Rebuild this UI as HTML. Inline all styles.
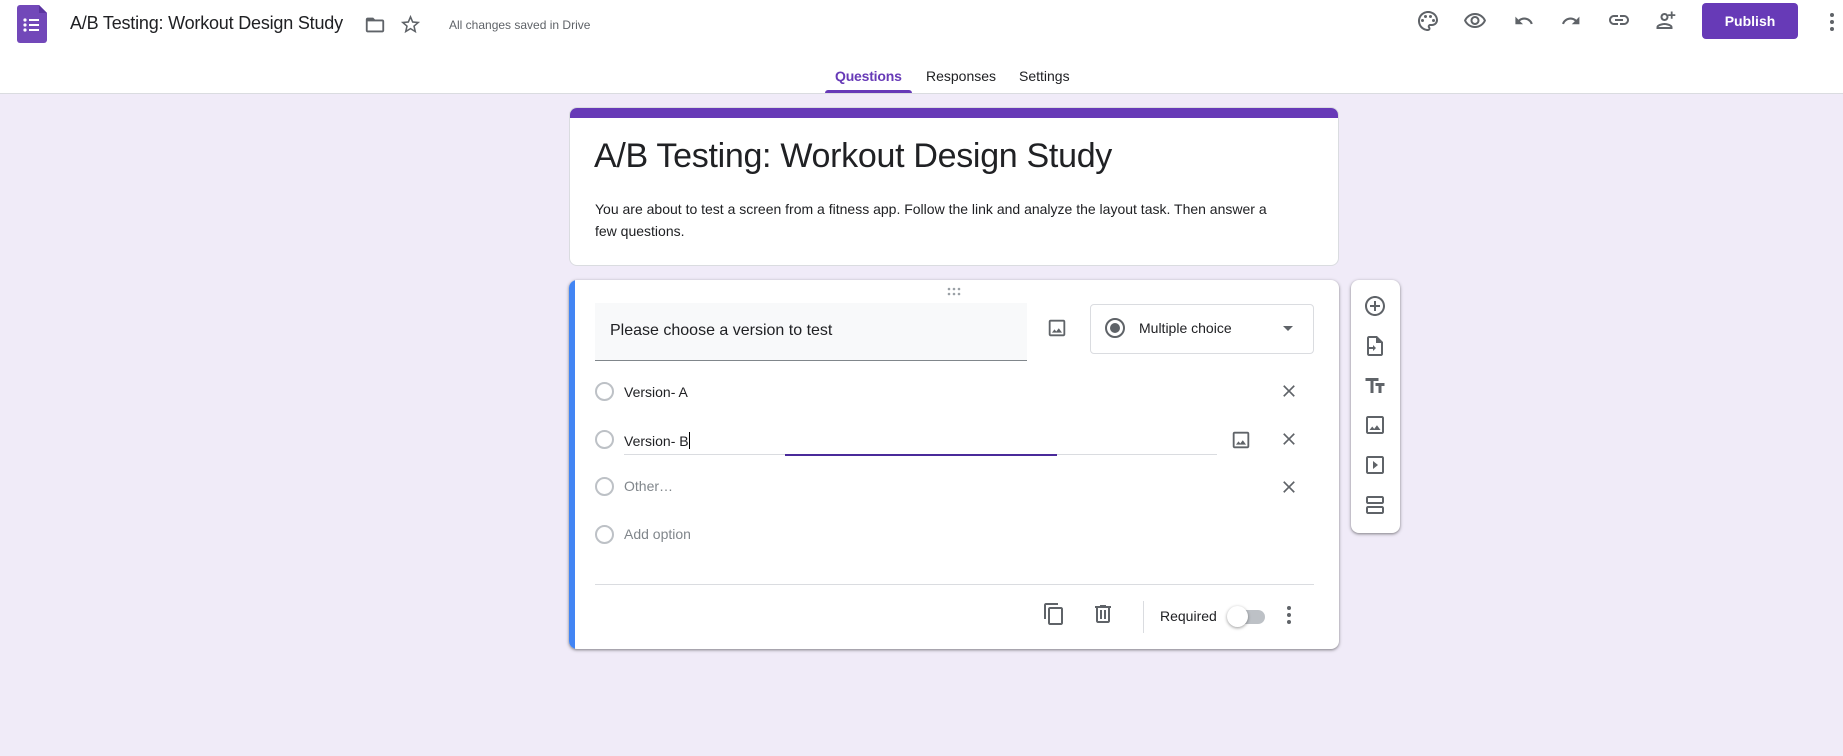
<!DOCTYPE html>
<html><head><meta charset="utf-8"><style>
*{box-sizing:border-box;margin:0;padding:0}
body{width:1843px;height:756px;overflow:hidden;background:#f0ebf8;font-family:"Liberation Sans",sans-serif;color:#202124;position:relative}
.a{position:absolute}
svg{display:block}
.ic{fill:#5f6368}
</style></head><body>
<div class="a" style="left:0;top:0;width:1843px;height:94px;background:#fff;border-bottom:1px solid #dadce0"></div>
<!-- logo -->
<svg class="a" style="left:17px;top:5px" width="30" height="38" viewBox="0 0 30 38"><path d="M3 0h19l8 8v27a3 3 0 0 1-3 3H3a3 3 0 0 1-3-3V3a3 3 0 0 1 3-3z" fill="#7248b9"/><path d="M22 0l8 8h-8z" fill="#5b34a0"/><g fill="#fff"><circle cx="8" cy="15" r="1.6"/><circle cx="8" cy="20" r="1.6"/><circle cx="8" cy="25" r="1.6"/><rect x="12" y="14" width="10" height="2"/><rect x="12" y="19" width="10" height="2"/><rect x="12" y="24" width="10" height="2"/></g></svg>
<div class="a" style="left:70px;top:13px;font-size:18px;letter-spacing:-0.2px">A/B Testing: Workout Design Study</div>
<svg class="a" style="left:364px;top:14px" width="22" height="22" viewBox="0 0 24 24"><path class="ic" d="M20 6h-8l-2-2H4c-1.1 0-2 .9-2 2v12c0 1.1.9 2 2 2h16c1.1 0 2-.9 2-2V8c0-1.1-.9-2-2-2zm0 12H4V8h16v10z"/></svg>
<svg class="a" style="left:399px;top:13px" width="23" height="23" viewBox="0 0 24 24"><path class="ic" d="M22 9.24l-7.19-.62L12 2 9.19 8.63 2 9.24l5.46 4.73L5.82 21 12 17.27 18.18 21l-1.63-7.03L22 9.24zM12 15.4l-3.76 2.27 1-4.28-3.32-2.88 4.38-.38L12 6.1l1.71 4.04 4.38.38-3.32 2.88 1 4.28L12 15.4z"/></svg>
<div class="a" style="left:449px;top:18px;font-size:12px;color:#5f6368">All changes saved in Drive</div>
<!-- right icons -->
<svg class="a" style="left:1416px;top:9px" width="24" height="24" viewBox="0 0 24 24"><path class="ic" d="M12 22C6.49 22 2 17.51 2 12S6.490 2 12 2s10 4.040 10 9c0 3.31-2.69 6-6 6h-1.77c-.28 0-.5.22-.5.5 0 .12.05.23.13.33.41.47.64 1.06.64 1.67A2.5 2.5 0 0 1 12 22zm0-18c-4.41 0-8 3.59-8 8s3.59 8 8 8c.28 0 .5-.22.5-.5a.54.54 0 0 0-.14-.35c-.41-.46-.63-1.05-.63-1.65a2.5 2.5 0 0 1 2.5-2.5H16c2.21 0 4-1.79 4-4 0-3.86-3.59-7-8-7z"/><circle class="ic" cx="6.5" cy="11.5" r="1.5"/><circle class="ic" cx="9.5" cy="7.5" r="1.5"/><circle class="ic" cx="14.5" cy="7.5" r="1.5"/><circle class="ic" cx="17.5" cy="11.5" r="1.5"/></svg>
<svg class="a" style="left:1463px;top:9px" width="24" height="24" viewBox="0 0 24 24"><path class="ic" d="M12 6a9.77 9.77 0 0 1 8.82 5.5C19.17 14.87 15.79 17 12 17s-7.17-2.13-8.82-5.5A9.77 9.770 0 0 1 12 6m0-2C7 4 2.73 7.11 1 11.5 2.73 15.89 7 19 12 19s9.27-3.11 11-7.5C21.27 7.11 17 4 12 4zm0 5a2.5 2.5 0 0 1 0 5 2.5 2.5 0 0 1 0-5m0-2c-2.48 0-4.5 2.02-4.5 4.5S9.52 16 12 16s4.5-2.02 4.5-4.5S14.48 7 12 7z"/></svg>
<svg class="a" style="left:1512px;top:9px" width="24" height="24" viewBox="0 0 24 24"><path class="ic" d="M12.5 8c-2.65 0-5.05.99-6.9 2.6L2 7v9h9l-3.62-3.62c1.39-1.16 3.160-1.88 5.12-1.88 3.54 0 6.55 2.31 7.6 5.5l2.37-.78C21.08 11.03 17.15 8 12.5 8z" transform="scale(.85) translate(2,2)"/></svg>
<svg class="a" style="left:1559px;top:9px" width="24" height="24" viewBox="0 0 24 24"><path class="ic" d="M18.4 10.6C16.55 8.99 14.15 8 11.5 8c-4.65 0-8.58 3.03-9.96 7.22L3.9 16c1.05-3.19 4.05-5.5 7.6-5.5 1.95 0 3.73.72 5.12 1.88L13 16h9V7l-3.6 3.6z" transform="scale(.85) translate(2,2)"/></svg>
<svg class="a" style="left:1607px;top:8px" width="24" height="24" viewBox="0 0 24 24"><path class="ic" d="M17 7h-4v2h4c1.65 0 3 1.35 3 3s-1.35 3-3 3h-4v2h4c2.76 0 5-2.24 5-5s-2.24-5-5-5zm-6 8H7c-1.65 0-3-1.35-3-3s1.35-3 3-3h4V7H7c-2.76 0-5 2.24-5 5s2.24 5 5 5h4v-2zm-3-4h8v2H8z"/></svg>
<svg class="a" style="left:1654px;top:9px" width="25" height="24" viewBox="0 0 24 24"><path class="ic" d="M15 12c2.21 0 4-1.79 4-4s-1.79-4-4-4-4 1.79-4 4 1.79 4 4 4zm0-6c1.1 0 2 .9 2 2s-.9 2-2 2-2-.9-2-2 .9-2 2-2zm0 8c-2.67 0-8 1.34-8 4v2h16v-2c0-2.660-5.33-4-8-4zm-6 4c.22-.72 3.31-2 6-2 2.7 0 5.8 1.29 6 2H9z" transform="translate(-5,0)"/><path class="ic" d="M19 8V5h-2v3h-3v2h3v3h2v-3h3V8z" transform="translate(1,-2) scale(.9)"/></svg>
<div class="a" style="left:1702px;top:3px;width:96px;height:36px;background:#673ab7;border-radius:4px;color:#fff;font-weight:bold;font-size:14px;text-align:center;line-height:36px">Publish</div>
<div class="a" style="left:1830px;top:13px"><div style="width:4px;height:4px;border-radius:2px;background:#5f6368;margin-bottom:3px"></div><div style="width:4px;height:4px;border-radius:2px;background:#5f6368;margin-bottom:3px"></div><div style="width:4px;height:4px;border-radius:2px;background:#5f6368"></div></div>
<!-- tabs -->
<div class="a" style="left:835px;top:68px;font-size:14px;color:#673ab7;font-weight:bold;letter-spacing:-0.2px">Questions</div>
<div class="a" style="left:825px;top:90px;width:87px;height:3px;background:#673ab7;border-radius:3px 3px 0 0"></div>
<div class="a" style="left:926px;top:68px;font-size:14px;color:#202124">Responses</div>
<div class="a" style="left:1019px;top:68px;font-size:14px;color:#202124">Settings</div>
<!-- header card -->
<div class="a" style="left:569px;top:107px;width:770px;height:159px;background:#fff;border-radius:8px;border:1px solid #dadce0;overflow:hidden">
 <div style="height:10px;background:#673ab7"></div>
</div>
<div class="a" style="left:594px;top:137px;font-size:34px;color:#202124;letter-spacing:-0.3px">A/B Testing: Workout Design Study</div>
<div class="a" style="left:595px;top:198px;width:680px;font-size:14px;line-height:22px;color:#202124">You are about to test a screen from a fitness app. Follow the link and analyze the layout task. Then answer a few questions.</div>
<!-- question card -->
<div class="a" style="left:569px;top:280px;width:770px;height:369px;background:#fff;border-radius:8px;box-shadow:0 1px 2px rgba(0,0,0,.3),0 1px 3px 1px rgba(0,0,0,.15);overflow:hidden"><div style="position:absolute;left:0;top:0;bottom:0;width:6px;background:#4285f4"></div></div>
<svg class="a" style="left:947px;top:287px" width="14" height="9"><g fill="#9aa0a6"><circle cx="2" cy="2" r="1.3"/><circle cx="7" cy="2" r="1.3"/><circle cx="12" cy="2" r="1.3"/><circle cx="2" cy="7" r="1.3"/><circle cx="7" cy="7" r="1.3"/><circle cx="12" cy="7" r="1.3"/></g></svg>
<div class="a" style="left:595px;top:303px;width:432px;height:58px;background:#f8f9fa;border-bottom:1px solid #80868b"></div>
<div class="a" style="left:610px;top:322px;font-size:16px">Please choose a version to test</div>
<svg class="a" style="left:1046px;top:317px" width="22" height="22" viewBox="0 0 24 24"><path class="ic" d="M19 3H5c-1.1 0-2 .9-2 2v14c0 1.1.9 2 2 2h14c1.1 0 2-.9 2-2V5c0-1.1-.9-2-2-2zm0 16H5V5h14v14zm-5.04-6.71l-2.75 3.54-1.96-2.36L6.5 17h11l-3.54-4.71z"/></svg>
<div class="a" style="left:1090px;top:304px;width:224px;height:50px;border:1px solid #dadce0;border-radius:4px"></div>
<div class="a" style="left:1105px;top:318px;width:20px;height:20px;border:2px solid #5f6368;border-radius:50%"><div style="margin:3px;width:10px;height:10px;border-radius:50%;background:#5f6368"></div></div>
<div class="a" style="left:1139px;top:320px;font-size:14px">Multiple choice</div>
<div class="a" style="left:1283px;top:326px;width:0;height:0;border-left:5px solid transparent;border-right:5px solid transparent;border-top:5px solid #5f6368"></div>
<!-- options -->
<div class="a" style="left:595px;top:382px;width:19px;height:19px;border:2px solid #bdc1c6;border-radius:50%"></div>
<div class="a" style="left:624px;top:384px;font-size:14px">Version- A</div>
<div class="a" style="left:595px;top:430px;width:19px;height:19px;border:2px solid #bdc1c6;border-radius:50%"></div>
<div class="a" style="left:624px;top:432px;font-size:14px">Version- B<span style="display:inline-block;width:1px;height:17px;background:#000;vertical-align:-3px"></span></div>
<div class="a" style="left:624px;top:454px;width:593px;height:1px;background:#dadce0"></div>
<div class="a" style="left:785px;top:454px;width:272px;height:2px;background:#4a2a9a"></div>
<svg class="a" style="left:1230px;top:429px" width="22" height="22" viewBox="0 0 24 24"><path class="ic" d="M19 3H5c-1.1 0-2 .9-2 2v14c0 1.1.9 2 2 2h14c1.1 0 2-.9 2-2V5c0-1.1-.9-2-2-2zm0 16H5V5h14v14zm-5.04-6.71l-2.75 3.54-1.96-2.36L6.5 17h11l-3.54-4.71z"/></svg>
<div class="a" style="left:595px;top:477px;width:19px;height:19px;border:2px solid #bdc1c6;border-radius:50%"></div>
<div class="a" style="left:624px;top:478px;font-size:14px;color:#80868b">Other…</div>
<div class="a" style="left:595px;top:525px;width:19px;height:19px;border:2px solid #bdc1c6;border-radius:50%"></div>
<div class="a" style="left:624px;top:526px;font-size:14px;color:#80868b">Add option</div>
<svg class="a" style="left:1279px;top:381px" width="20" height="20" viewBox="0 0 24 24"><path class="ic" d="M19 6.41L17.590 5 12 10.59 6.41 5 5 6.41 10.59 12 5 17.59 6.41 19 12 13.41 17.59 19 19 17.59 13.41 12z"/></svg>
<svg class="a" style="left:1279px;top:429px" width="20" height="20" viewBox="0 0 24 24"><path class="ic" d="M19 6.41L17.59 5 12 10.59 6.41 5 5 6.41 10.59 12 5 17.59 6.41 19 12 13.41 17.59 19 19 17.59 13.41 12z"/></svg>
<svg class="a" style="left:1279px;top:477px" width="20" height="20" viewBox="0 0 24 24"><path class="ic" d="M19 6.41L17.59 5 12 10.59 6.41 5 5 6.41 10.59 12 5 17.59 6.41 19 12 13.41 17.59 19 19 17.59 13.41 12z"/></svg>
<div class="a" style="left:595px;top:584px;width:719px;height:1px;background:#dadce0"></div>
<!-- footer -->
<svg class="a" style="left:1042px;top:602px" width="24" height="24" viewBox="0 0 24 24"><path class="ic" d="M16 1H4c-1.1 0-2 .9-2 2v14h2V3h12V1zm3 4H8c-1.1 0-2 .9-2 2v14c0 1.1.9 2 2 2h11c1.1 0 2-.9 2-2V7c0-1.1-.9-2-2-2zm0 16H8V7h11v14z"/></svg>
<svg class="a" style="left:1091px;top:602px" width="24" height="24" viewBox="0 0 24 24"><path class="ic" d="M15 4V3H9v1H4v2h1v13c0 1.1.9 2 2 2h10c1.1 0 2-.9 2-2V6h1V4h-5zm2 15H7V6h10v13zM9 8h2v9H9zm4 0h2v9h-2z"/></svg>
<div class="a" style="left:1143px;top:601px;width:1px;height:32px;background:#dadce0"></div>
<div class="a" style="left:1160px;top:608px;font-size:14px">Required</div>
<div class="a" style="left:1232px;top:610px;width:33px;height:14px;border-radius:7px;background:#bdc1c6"></div>
<div class="a" style="left:1227px;top:606px;width:21px;height:21px;border-radius:50%;background:#fff;box-shadow:0 1px 3px rgba(0,0,0,.4)"></div>
<div class="a" style="left:1287px;top:606px"><div style="width:4px;height:4px;border-radius:2px;background:#5f6368;margin-bottom:3px"></div><div style="width:4px;height:4px;border-radius:2px;background:#5f6368;margin-bottom:3px"></div><div style="width:4px;height:4px;border-radius:2px;background:#5f6368"></div></div>
<!-- side toolbar -->
<div class="a" style="left:1351px;top:280px;width:49px;height:253px;background:#fff;border-radius:8px;box-shadow:0 1px 2px rgba(0,0,0,.3),0 1px 3px 1px rgba(0,0,0,.15)"></div>
<svg class="a" style="left:1363px;top:294px" width="24" height="24" viewBox="0 0 24 24"><path class="ic" d="M13 7h-2v4H7v2h4v4h2v-4h4v-2h-4V7zm-1-5C6.48 2 2 6.48 2 12s4.48 10 10 10 10-4.48 10-10S17.52 2 12 2zm0 18c-4.41 0-8-3.59-8-8s3.590-8 8-8 8 3.59 8 8-3.59 8-8 8z"/></svg>
<svg class="a" style="left:1363px;top:334px" width="24" height="24" viewBox="0 0 24 24"><path class="ic" d="M14 2H6c-1.1 0-2 .9-2 2v16c0 1.1.9 2 2 2h12c1.1 0 2-.9 2-2V8l-6-6zm4 18H6V4h7v5h5v11z"/><path class="ic" d="M10 11l3 3-3 3v-2H4v-2h6z"/></svg>
<svg class="a" style="left:1363px;top:374px" width="24" height="24" viewBox="0 0 24 24"><path class="ic" d="M2.5 4v3h5v12h3V7h5V4h-13zm19 5h-9v3h3v7h3v-7h3V9z"/></svg>
<svg class="a" style="left:1363px;top:413px" width="24" height="24" viewBox="0 0 24 24"><path class="ic" d="M19 3H5c-1.1 0-2 .9-2 2v14c0 1.1.9 2 2 2h14c1.1 0 2-.9 2-2V5c0-1.1-.9-2-2-2zm0 16H5V5h14v14zm-5.04-6.71l-2.75 3.54-1.96-2.36L6.5 17h11l-3.54-4.71z"/></svg>
<svg class="a" style="left:1363px;top:453px" width="24" height="24" viewBox="0 0 24 24"><path class="ic" d="M19 3H5c-1.1 0-2 .9-2 2v14c0 1.1.9 2 2 2h14c1.1 0 2-.9 2-2V5c0-1.1-.9-2-2-2zm0 16H5V5h14v14zM10 8v8l5-4z"/></svg>
<svg class="a" style="left:1363px;top:493px" width="24" height="24" viewBox="0 0 24 24"><path class="ic" d="M19 13H5c-1.1 0-2 .9-2 2v4c0 1.1.9 2 2 2h14c1.1 0 2-.9 2-2v-4c0-1.1-.9-2-2-2zm0 6H5v-4h14v4zm0-16H5c-1.1 0-2 .9-2 2v4c0 1.1.9 2 2 2h14c1.1 0 2-.9 2-2V5c0-1.1-.9-2-2-2zm0 6H5V5h14v4z"/></svg>
</body></html>
